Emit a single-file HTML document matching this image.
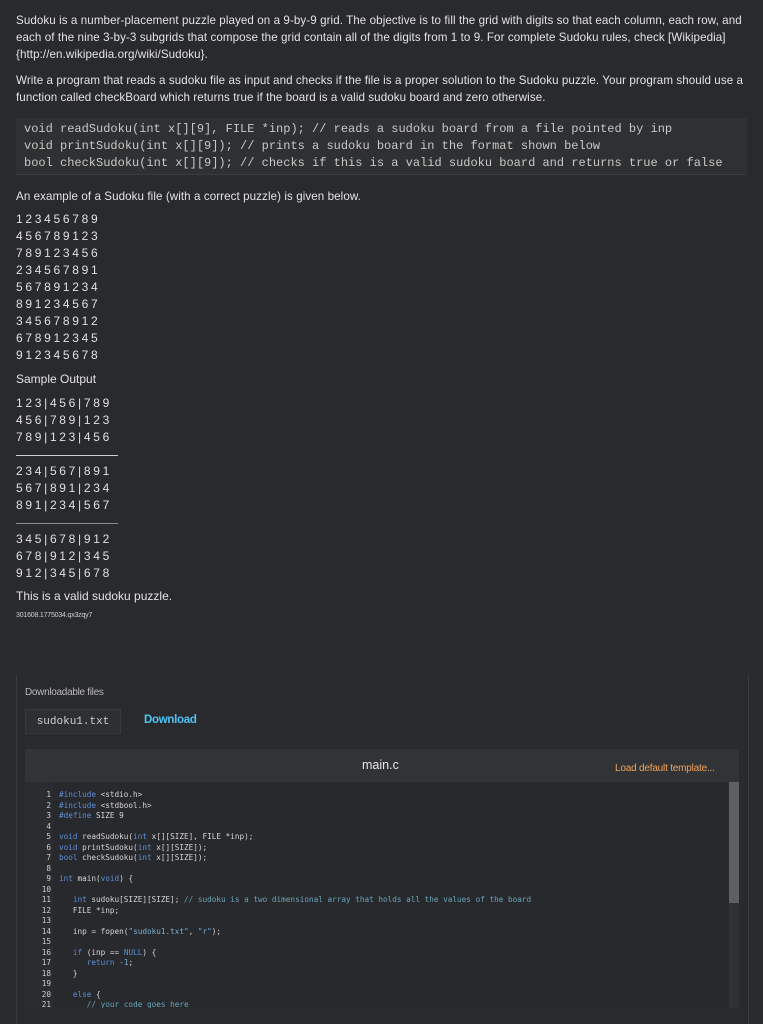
<!DOCTYPE html>
<html><head><meta charset="utf-8"><style>
body{margin:0;background:#292a2d;width:763px;height:1024px;overflow:hidden;font-family:"Liberation Sans",sans-serif;color:#e3e3e3;position:relative}
.a{position:absolute;white-space:nowrap}
p{margin:0}
.t{font-size:11.6px;letter-spacing:0.08px;line-height:17px}
.mono{font-family:"Liberation Mono",monospace}
.code{position:absolute;left:16px;top:118px;width:731px;height:56px;background:#2f3032;border-bottom:1px solid #3a3b3d;color:#c8c8c8;font-size:12px;line-height:17px}
.dig{font-size:12px;letter-spacing:2.7px;line-height:17px;color:#e0e0e0}
.ed{font-family:"DejaVu Sans Mono",monospace;font-size:7.7px;line-height:10.5px;color:#d6d6d6}
.k{color:#5c8ed6}.c{color:#6aa3b8}.s{color:#7ab0d8}
</style></head><body>
<div class="a t" style="left:16px;top:12px;width:745px;white-space:normal">Sudoku is a number-placement puzzle played on a 9-by-9 grid. The objective is to fill the grid with digits so that each column, each row, and<br>each of the nine 3-by-3 subgrids that compose the grid contain all of the digits from 1 to 9. For complete Sudoku rules, check [Wikipedia]<br>{http://en.wikipedia.org/wiki/Sudoku}.</div>
<div class="a t" style="left:16px;top:72px;width:745px;white-space:normal">Write a program that reads a sudoku file as input and checks if the file is a proper solution to the Sudoku puzzle. Your program should use a<br>function called checkBoard which returns true if the board is a valid sudoku board and zero otherwise.</div>
<div class="code mono"><div style="padding:3px 0 0 8px;white-space:pre">void readSudoku(int x[][9], FILE *inp); // reads a sudoku board from a file pointed by inp
void printSudoku(int x[][9]); // prints a sudoku board in the format shown below
bool checkSudoku(int x[][9]); // checks if this is a valid sudoku board and returns true or false</div></div>
<div class="a t" style="left:16px;top:188px">An example of a Sudoku file (with a correct puzzle) is given below.</div>
<div class="a dig" style="left:16px;top:211px;white-space:pre">123456789
456789123
789123456
234567891
567891234
891234567
345678912
678912345
912345678</div>
<div class="a" style="left:16px;top:372px;font-size:12px">Sample Output</div>
<div class="a dig" style="left:16px;top:395px;white-space:pre">123|456|789
456|789|123
789|123|456
<span style="display:inline-block;width:102px;height:9px;border-bottom:1px solid #cfcfcf;vertical-align:top"></span>
234|567|891
567|891|234
891|234|567
<span style="display:inline-block;width:102px;height:9px;border-bottom:1px solid #8a8a8a;vertical-align:top"></span>
345|678|912
678|912|345
912|345|678</div>
<div class="a" style="left:16px;top:589px;font-size:12px">This is a valid sudoku puzzle.</div>
<div class="a" style="left:16px;top:612px;font-size:7px;color:#cfcfcf;letter-spacing:-0.2px">301608.1775034.qx3zqy7</div>

<div class="a" style="left:16px;top:675px;width:731px;height:349px;border-left:1px solid #3a3b3e;border-right:1px solid #3a3b3e"></div>
<div class="a" style="left:25px;top:687px;font-size:10px;color:#b8b8b8;letter-spacing:-0.3px">Downloadable files</div>
<div class="a mono" style="left:25px;top:709px;width:96px;height:25px;background:#2e2f32;border:1px solid #38393b;box-sizing:border-box;font-size:11px;line-height:24px;text-align:center;color:#cfcfcf">sudoku1.txt</div>
<div class="a" style="left:144px;top:714px;font-size:11.5px;font-weight:bold;color:#4fc3f7;letter-spacing:-0.3px">Download</div>

<div class="a" style="left:25px;top:749px;width:714px;height:33px;background:#323336"></div>
<div class="a" style="left:362px;top:758px;font-size:12.5px;color:#e6e6e6">main.c</div>
<div class="a" style="left:615px;top:763px;font-size:10px;color:#f2a35a;letter-spacing:-0.2px">Load default template...</div>
<div class="a" style="left:25px;top:782px;width:714px;height:226px;background:#28292c;overflow:hidden">
<div style="position:absolute;left:704px;top:0;width:10px;height:226px;background:#303134"></div>
<div style="position:absolute;left:704px;top:0;width:10px;height:121px;background:#5d5f62"></div>
<div style="position:absolute;left:0;top:0;width:28px;height:226px;background:#2b2c2f"></div>
<div class="ed" style="position:absolute;left:0;top:8px;width:26px;text-align:right;white-space:pre;color:#cfcfcf">1
2
3
4
5
6
7
8
9
10
11
12
13
14
15
16
17
18
19
20
21</div>
<div class="ed" style="position:absolute;left:34px;top:8px;white-space:pre"><span class="k">#include</span> &lt;stdio.h&gt;
<span class="k">#include</span> &lt;stdbool.h&gt;
<span class="k">#define</span> SIZE 9

<span class="k">void</span> readSudoku(<span class="k">int</span> x[][SIZE], FILE *inp);
<span class="k">void</span> printSudoku(<span class="k">int</span> x[][SIZE]);
<span class="k">bool</span> checkSudoku(<span class="k">int</span> x[][SIZE]);

<span class="k">int</span> main(<span class="k">void</span>) {

   <span class="k">int</span> sudoku[SIZE][SIZE]; <span class="c">// sudoku is a two dimensional array that holds all the values of the board</span>
   FILE *inp;

   inp = fopen(<span class="s">"sudoku1.txt"</span>, <span class="s">"r"</span>);

   <span class="k">if</span> (inp == <span class="k">NULL</span>) {
      <span class="k">return</span> <span class="s">-1</span>;
   }

   <span class="k">else</span> {
      <span class="c">// your code goes here</span></div>
</div>
</body></html>
